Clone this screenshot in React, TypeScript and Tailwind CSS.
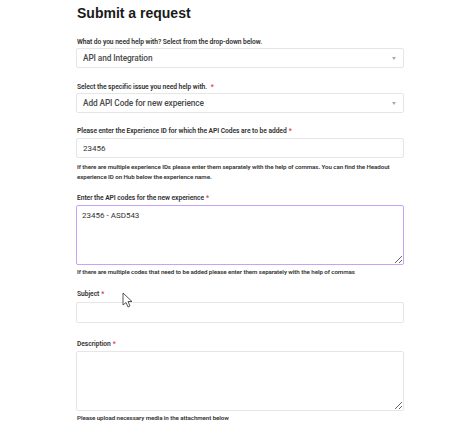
import React from 'react';

const labelCls =
  "block h-[10px] leading-[10px] text-[6.7px] font-semibold text-[#2f2f2f] font-['Roboto',sans-serif] tracking-[-0.05px]";
const helpCls =
  "leading-[10px] text-[6.2px] font-semibold text-[#333] font-['Roboto',sans-serif] tracking-[-0.08px]";
const boxCls =
  'w-full border border-[#e6e6e6] rounded-[2px] bg-white';

function Req() {
  return <span className="text-[#e0344a] ml-[2px]">*</span>;
}

function SelectBox({ value }: { value: string }) {
  return (
    <div className={`${boxCls} h-[20px] flex items-center justify-between pl-[6px] pr-[7px]`}>
      <span className="text-[8.3px] font-medium text-[#4a4a4a] font-['Roboto',sans-serif] tracking-[-0.1px]">
        {value}
      </span>
      <svg width="4" height="3" viewBox="0 0 4 3" className="text-[#aaa]">
        <path d="M0 0 L4 0 L2 3 Z" fill="currentColor" />
      </svg>
    </div>
  );
}

function Cursor() {
  return (
    <svg
      className="absolute left-[122px] top-[292px]"
      width="11"
      height="16"
      viewBox="0 0 11 16"
    >
      <path
        d="M1 1 L1 13 L4 10.5 L6 15 L8 14 L6 9.5 L10 9.5 Z"
        fill="#fff"
        stroke="#444"
        strokeWidth="0.9"
        strokeLinejoin="round"
      />
    </svg>
  );
}

export default function App() {
  return (
    <div className="relative w-[474px] h-[424px] overflow-hidden bg-white">
      <div className="ml-[76px] w-[328px] pt-[5px] flex flex-col">
        <h1 className="h-[16px] leading-[16px] text-[14px] font-bold text-[#1a1a1a] font-['Liberation_Sans',sans-serif] ml-[1px]">
          Submit a request
        </h1>

        <label className={`${labelCls} mt-[16px] ml-[1px]`}>
          What do you need help with? Select from the drop-down below.
        </label>
        <div className="mt-[1px]">
          <SelectBox value="API and Integration" />
        </div>

        <label className={`${labelCls} mt-[14px] ml-[1px]`}>
          Select the specific issue you need help with. <Req />
        </label>
        <div className="mt-[1px]">
          <SelectBox value="Add API Code for new experience" />
        </div>

        <label className={`${labelCls} mt-[13px] ml-[1px]`}>
          Please enter the Experience ID for which the API Codes are to be added
          <Req />
        </label>
        <input
          readOnly
          value="23456"
          className={`${boxCls} mt-[2px] h-[20px] px-[6px] text-[8px] text-[#333] font-['Roboto',sans-serif] outline-none`}
        />
        <p className={`${helpCls} mt-[4px] ml-[1px]`}>
          If there are multiple experience IDs please enter them separately with the help of commas.
          You can find the Headout experience ID on Hub below the experience name.
        </p>

        <label className={`${labelCls} mt-[11px] ml-[1px]`}>
          Enter the API codes for the new experience
          <Req />
        </label>
        <textarea
          readOnly
          value="23456 - ASD543"
          className="mt-[2px] h-[60px] w-full border-[1.5px] border-[#c9a3f3] rounded-[2px] px-[5px] py-[5px] text-[8px] leading-[10px] text-[#333] font-['Roboto',sans-serif] outline-none resize-y"
        />
        <p className={`${helpCls} mt-[2px] ml-[1px]`}>
          If there are multiple codes that need to be added please enter them separately with the help of commas
        </p>

        <label className={`${labelCls} mt-[12px] ml-[1px]`}>
          Subject
          <Req />
        </label>
        <input
          readOnly
          value=""
          className={`${boxCls} mt-[3px] h-[21px] px-[6px] text-[8px] outline-none`}
        />

        <label className={`${labelCls} mt-[16px] ml-[1px]`}>
          Description
          <Req />
        </label>
        <textarea
          readOnly
          value=""
          className={`${boxCls} mt-[2px] h-[60px] px-[5px] py-[5px] text-[8px] outline-none resize-y`}
        />
        <p className={`${helpCls} mt-[2px] ml-[1px]`}>
          Please upload necessary media in the attachment below
        </p>
      </div>
      <Cursor />
    </div>
  );
}
